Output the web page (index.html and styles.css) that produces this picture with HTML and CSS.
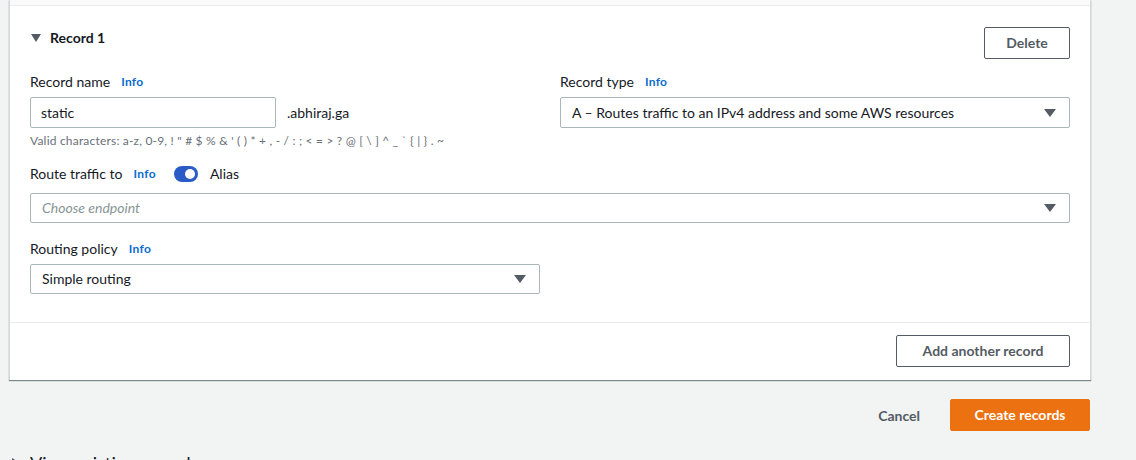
FILE: index.html
```html
<!DOCTYPE html>
<html lang="en">
<head>
  <meta charset="UTF-8">
  <meta name="viewport" content="width=device-width, initial-scale=1.0">
  <title>Create records</title>
  <link rel="stylesheet" href="styles.css">
</head>
<body>
  <div class="page">
    <div class="card">
      <div class="card-top"></div>

      <div class="record">
        <div class="record-header">
          <div class="record-title">
            <span class="caret-down"></span>
            Record 1
          </div>
          <button class="btn">Delete</button>
        </div>

        <div class="grid">
          <div class="field">
            <label class="field-label">Record name <a class="info">Info</a></label>
            <div class="name-row">
              <input type="text" class="input name-input" value="static">
              <span class="suffix">.abhiraj.ga</span>
            </div>
            <div class="hint">Valid characters: a-z, 0-9, ! " # $ % &amp; ' ( ) * + , - / : ; &lt; = &gt; ? @ [ \ ] ^ _ ` { | } . ~</div>
          </div>

          <div class="field">
            <label class="field-label">Record type <a class="info">Info</a></label>
            <div class="select">
              <span>A – Routes traffic to an IPv4 address and some AWS resources</span>
              <span class="select-arrow"></span>
            </div>
          </div>
        </div>

        <div class="field route">
          <label class="field-label">
            Route traffic to <a class="info">Info</a>
            <span class="toggle"><span class="knob"></span></span>
            <span class="toggle-text">Alias</span>
          </label>
          <div class="select placeholder">
            <span>Choose endpoint</span>
            <span class="select-arrow"></span>
          </div>
        </div>

        <div class="grid policy">
          <div class="field">
            <label class="field-label">Routing policy <a class="info">Info</a></label>
            <div class="select">
              <span>Simple routing</span>
              <span class="select-arrow"></span>
            </div>
          </div>
        </div>
      </div>

      <div class="card-footer">
        <button class="btn">Add another record</button>
      </div>
    </div>

    <div class="actions">
      <button class="btn-link">Cancel</button>
      <button class="btn-primary">Create records</button>
    </div>

    <div class="existing">
      <span class="caret-right"></span>
      View existing records
    </div>
  </div>
</body>
</html>
```

FILE: styles.css
```css
body {
  margin: 0;
  background-color: #f2f3f3;
  font-family: Lato, 'Noto Sans', sans-serif;
  font-size: 14px;
  line-height: 22px;
  color: #16191f;
  overflow: hidden;
}

.page {
  padding: 0 45px 0 9px;
}

.card {
  background-color: #ffffff;
  border-left: 1px solid #d5dbdb;
  border-right: 1px solid #d5dbdb;
  box-shadow: 0 1px 1px 0 rgba(0, 28, 36, 0.5);
}

.card-top {
  height: 5px;
  background-color: #fafafa;
  border-bottom: 1px solid #eaeded;
}

.record {
  padding: 21px 20px 28px 20px;
  border-bottom: 1px solid #eaeded;
}

.record-header {
  display: flex;
  justify-content: space-between;
  align-items: flex-start;
}

.record-title {
  display: flex;
  align-items: center;
  font-weight: 700;
  gap: 9px;
  padding-left: 1px;
}

.caret-down {
  width: 0;
  height: 0;
  border-left: 5px solid transparent;
  border-right: 5px solid transparent;
  border-top: 8px solid #545b64;
}

.btn {
  font-family: inherit;
  font-size: 14px;
  font-weight: 700;
  line-height: 22px;
  color: #545b64;
  background-color: #ffffff;
  border: 1px solid #545b64;
  border-radius: 2px;
  padding: 4px 20px;
  cursor: pointer;
}

.record-header .btn {
  width: 86px;
}

.grid {
  display: grid;
  grid-template-columns: 1fr 1fr;
  column-gap: 20px;
  margin-top: 12px;
}

.field-label {
  display: flex;
  align-items: center;
  margin-bottom: 4px;
}

.info {
  font-size: 12px;
  font-weight: 700;
  color: #0a6bd0;
  margin-left: 11px;
  letter-spacing: 0.3px;
  cursor: pointer;
}

.name-row {
  display: flex;
  align-items: center;
}

.input {
  box-sizing: border-box;
  height: 31px;
  font-family: inherit;
  font-size: 14px;
  color: #16191f;
  border: 1px solid #aab7b8;
  border-radius: 2px;
  padding: 4px 10px;
  outline: none;
}

.name-input {
  width: 246px;
}

.suffix {
  margin-left: 11px;
}

.hint {
  font-size: 12px;
  line-height: 16px;
  color: #687078;
  margin-top: 5px;
  letter-spacing: 0.2px;
}

.select {
  box-sizing: border-box;
  height: 31px;
  display: flex;
  align-items: center;
  justify-content: space-between;
  border: 1px solid #aab7b8;
  border-radius: 2px;
  padding: 0 13px 0 11px;
  background-color: #ffffff;
}

.select-arrow {
  width: 0;
  height: 0;
  border-left: 6px solid transparent;
  border-right: 6px solid transparent;
  border-top: 8px solid #545b64;
}

.placeholder {
  height: 30px;
  color: #879596;
  font-style: italic;
}

.route {
  margin-top: 14px;
}

.route .field-label {
  margin-bottom: 8px;
}

.toggle {
  position: relative;
  width: 24px;
  height: 16px;
  margin-left: 18px;
  border-radius: 8px;
  background-color: #2a5bc6;
}

.knob {
  position: absolute;
  top: 3px;
  right: 3px;
  width: 10px;
  height: 10px;
  border-radius: 50%;
  background-color: #ffffff;
}

.toggle-text {
  margin-left: 12px;
}

.policy {
  margin-top: 15px;
}

.policy .select {
  height: 30px;
}

.card-footer {
  display: flex;
  justify-content: flex-end;
  padding: 12px 20px 13px 20px;
}

.card-footer .btn {
  width: 174px;
}

.actions {
  display: flex;
  justify-content: flex-end;
  align-items: center;
  gap: 30px;
  margin-top: 19px;
  padding-right: 1px;
}

.btn-link {
  font-family: inherit;
  font-size: 14px;
  font-weight: 700;
  color: #545b64;
  background: none;
  border: none;
  padding: 4px 0;
  cursor: pointer;
}

.btn-primary {
  font-family: inherit;
  font-size: 14px;
  font-weight: 700;
  line-height: 22px;
  color: #ffffff;
  background-color: #ec7211;
  border: 1px solid #ec7211;
  border-radius: 2px;
  padding: 4px 20px;
  width: 140px;
  cursor: pointer;
}

.existing {
  display: flex;
  align-items: center;
  gap: 10px;
  margin-top: 20px;
  padding-left: 3px;
  font-size: 18px;
  line-height: 24px;
}

.caret-right {
  width: 0;
  height: 0;
  border-top: 5px solid transparent;
  border-bottom: 5px solid transparent;
  border-left: 8px solid #545b64;
}
```
